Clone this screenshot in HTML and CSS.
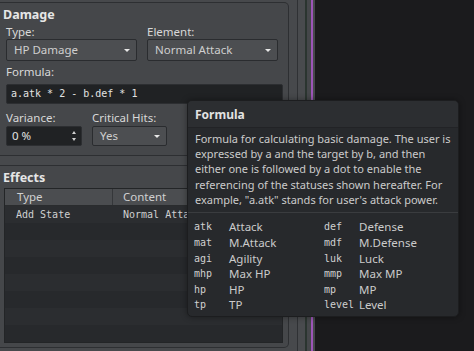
FILE: index.html
```html
<!DOCTYPE html>
<html lang="en">
<head>
<meta charset="UTF-8">
<title>Skill Editor - Damage</title>
<link rel="stylesheet" href="styles.css">
</head>
<body>

<div class="screen">

  <!-- EDITOR PANE -->
  <div class="pane">

    <section class="group damage">
      <h3>Damage</h3>
      <div class="row">
        <div class="field w-type">
          <span class="label">Type:</span>
          <div class="select">HP Damage</div>
        </div>
        <div class="field w-elem">
          <span class="label">Element:</span>
          <div class="select">Normal Attack</div>
        </div>
      </div>
      <div class="field formula">
        <span class="label">Formula:</span>
        <div class="input mono">a.atk * 2 - b.def * 1</div>
      </div>
      <div class="row">
        <div class="field w-var">
          <span class="label">Variance:</span>
          <div class="input spin">0 %<i class="spinner"></i></div>
        </div>
        <div class="field w-crit">
          <span class="label">Critical Hits:</span>
          <div class="select">Yes</div>
        </div>
      </div>
    </section>

    <section class="group effects">
      <h3>Effects</h3>
      <div class="table">
        <div class="thead">
          <div class="th c-type">Type</div>
          <div class="th c-content">Content</div>
        </div>
        <div class="tr"><span class="c-type">Add State</span><span class="c-content">Normal Attack</span></div>
        <div class="tr"></div>
        <div class="tr"></div>
        <div class="tr"></div>
        <div class="tr"></div>
        <div class="tr"></div>
        <div class="tr"></div>
        <div class="tr"></div>
      </div>
    </section>

  </div>

  <!-- SPLITTER -->
  <div class="splitter">
    <i class="s1"></i><i class="s2"></i><i class="s3"></i><i class="s4"></i><i class="s5"></i>
  </div>

  <div class="workspace"></div>

  <!-- TOOLTIP -->
  <div class="tooltip">
    <div class="tip-title">Formula</div>
    <p class="tip-body">Formula for calculating basic damage. The user is<br>expressed by a and the target by b, and then<br>either one is followed by a dot to enable the<br>referencing of the statuses shown hereafter. For<br>example, "a.atk" stands for user's attack power.</p>
    <div class="tip-list">
      <div class="col">
        <div><code>atk</code>Attack</div>
        <div><code>mat</code>M.Attack</div>
        <div><code>agi</code>Agility</div>
        <div><code>mhp</code>Max HP</div>
        <div><code>hp</code>HP</div>
        <div><code>tp</code>TP</div>
      </div>
      <div class="col">
        <div><code>def</code>Defense</div>
        <div><code>mdf</code>M.Defense</div>
        <div><code>luk</code>Luck</div>
        <div><code>mmp</code>Max MP</div>
        <div><code>mp</code>MP</div>
        <div><code>level</code>Level</div>
      </div>
    </div>
  </div>

</div>

</body>
</html>
```

FILE: styles.css
```css
body{
 margin:0;
 background:#1b1b1d;
 font-family:'Noto Sans',sans-serif;
 font-size:11.5px;
 color:#d4d4d4;
 overflow:hidden;
}

.screen{
 position:relative;
 display:flex;
 width:474px;
 height:351px;
 overflow:hidden;
}

.mono, code{
 font-family:'DejaVu Sans Mono',monospace;
}

/* EDITOR PANE */
.pane{
 width:289px;
 padding:2px 8px 0 0;
 background:#47494c;
 flex-shrink:0;
}

.group{
 border:1px solid #2d2f32;
 border-left:none;
 border-radius:0 5px 5px 0;
 background:#45474a;
 padding:0 0 0 6px;
}

.group h3{
 margin:0 0 0 -3px;
 font-size:12.5px;
 line-height:18px;
 padding-top:3px;
 font-weight:bold;
 color:#e6e6e6;
}

.damage{
 height:152px;
}

.effects{
 margin-top:9px;
 height:181px;
 padding-left:4px;
}

.effects h3{
 margin-left:-1px;
 padding-top:2px;
 line-height:19px;
}

.row{
 display:flex;
 gap:10px;
}

.field{
 display:flex;
 flex-direction:column;
}

.label{
 display:block;
 line-height:14px;
 color:#d8d8d8;
}

.damage h3 + .row .label{ margin-top:1px; }

.w-type{ width:131px; }
.w-elem{ width:131px; }
.w-var{ width:76px; }
.w-crit{ width:75px; }

.formula{ margin-top:4px; width:277px; }
.formula .label{ margin-bottom:5px; }
.formula + .row{ margin-top:7px; }
.formula + .row .label{ margin-bottom:1px; }

.select{
 position:relative;
 box-sizing:border-box;
 height:22px;
 line-height:20px;
 padding-left:7px;
 background:#4c4e51;
 border:1px solid #2a2c2f;
 border-radius:2px;
 color:#cfcfcf;
}

.select::after{
 content:"";
 position:absolute;
 right:6px;
 top:9px;
 border-left:3px solid transparent;
 border-right:3px solid transparent;
 border-top:3px solid #e8e8e8;
}

.w-crit .select{ height:20px; line-height:18px; }
.w-crit .select::after{ top:8px; }

.input{
 position:relative;
 box-sizing:border-box;
 height:20px;
 line-height:18px;
 padding-left:4px;
 background:#202224;
 border:1px solid #2c2e31;
 border-radius:2px;
 color:#e2e2e2;
}

.input.mono{ font-size:10px; }

.spin{ padding-left:5px; }

.spinner::before, .spinner::after{
 content:"";
 position:absolute;
 right:5px;
 border-left:2.5px solid transparent;
 border-right:2.5px solid transparent;
}
.spinner::before{ top:4px; border-bottom:3px solid #d0d0d0; }
.spinner::after{ top:11px; border-top:3px solid #d0d0d0; }

/* TABLE */
.table{
 margin-top:1px;
 width:277px;
 height:153px;
 border:1px solid #232527;
 background:#2b2d30;
 overflow:hidden;
}

.thead{
 display:flex;
 height:16px;
 background:#4b4d50;
 border-bottom:1px solid #2a2c2e;
}

.th{
 box-sizing:border-box;
 line-height:16px;
 padding-left:12px;
 color:#d0d0d0;
 border-right:1px solid #35373a;
}

.th.c-type{ width:108px; }
.th.c-content{ flex:1; padding-left:10px; }

.tr{
 display:flex;
 height:17px;
 line-height:17px;
 font-family:'DejaVu Sans Mono',monospace;
 font-size:10px;
 color:#d0d0d0;
}

.tr:nth-child(odd){ background:#27292c; }

.tr .c-type{ width:107px; padding-left:11px; box-sizing:border-box; }
.tr .c-content{ padding-left:11px; white-space:nowrap; }

/* SPLITTER */
.splitter{
 display:flex;
 width:18px;
 flex-shrink:0;
 background:#47494c;
}

.splitter i{ display:block; height:100%; }
.splitter .s1{ width:1px; background:#2f3134; }
.splitter .s2{ width:7px; background:#494b4e; }
.splitter .s3{ width:2px; background:#2b3530; }
.splitter .s4{ width:4px; background:#45474a; }
.splitter .s5{ width:2px; background:#9d55b8; }

.workspace{
 flex:1;
 background:#1b1b1d;
 margin-left:2px;
}

/* TOOLTIP */
.tooltip{
 position:absolute;
 left:187px;
 top:100px;
 width:272px;
 height:217px;
 box-sizing:border-box;
 background:#27292c;
 border:1px solid #1c1d1f;
 border-radius:5px;
 box-shadow:0 0 6px rgba(0,0,0,0.4);
 color:#cbcbcb;
 overflow:hidden;
}

.tip-title{
 height:26px;
 line-height:28px;
 padding-left:7px;
 font-weight:bold;
 font-size:12px;
 color:#e2e2e2;
 background:#2c2e31;
 border-bottom:1px solid #222326;
}

.tip-body{
 margin:0;
 padding:3px 4px 5px 7px;
 line-height:15.2px;
 font-size:11px;
 white-space:nowrap;
 border-bottom:1px solid #3a3c3f;
}

.tip-list{
 display:flex;
 padding:6px 0 0 6px;
 font-size:11.5px;
}

.tip-list .col{ width:130px; }

.tip-list .col div{
 display:flex;
 align-items:center;
 height:15.6px;
}

.tip-list code{
 width:35px;
 flex-shrink:0;
 font-size:10px;
 color:#d0d0d0;
}
```
